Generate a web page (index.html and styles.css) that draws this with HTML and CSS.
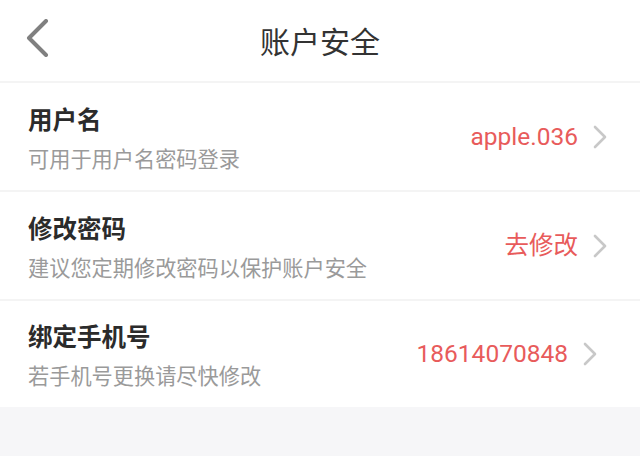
FILE: index.html
```html
<!DOCTYPE html>
<html lang="zh-CN">
<head>
<meta charset="utf-8">
<title>账户安全</title>
<link rel="stylesheet" href="styles.css">
</head>
<body>
<div class="page">
  <header class="topbar">
    <span class="back">
      <svg width="24" height="38" viewBox="0 0 24 38"><polyline points="20,2 3,19 20,36" fill="none" stroke="#808080" stroke-width="4" stroke-linecap="round" stroke-linejoin="round"/></svg>
    </span>
    <h1 class="title">账户安全</h1>
  </header>
  <ul class="list">
    <li class="row">
      <div class="text">
        <div class="label">用户名</div>
        <div class="hint">可用于用户名密码登录</div>
      </div>
      <div class="value">apple.036</div>
      <svg class="arrow" width="14" height="24" viewBox="0 0 14 24"><polyline points="2,2 12,12 2,22" fill="none" stroke="#c8c8c8" stroke-width="2.6" stroke-linecap="round" stroke-linejoin="round"/></svg>
    </li>
    <li class="row">
      <div class="text">
        <div class="label">修改密码</div>
        <div class="hint">建议您定期修改密码以保护账户安全</div>
      </div>
      <div class="value">去修改</div>
      <svg class="arrow" width="14" height="24" viewBox="0 0 14 24"><polyline points="2,2 12,12 2,22" fill="none" stroke="#c8c8c8" stroke-width="2.6" stroke-linecap="round" stroke-linejoin="round"/></svg>
    </li>
    <li class="row row-shift">
      <div class="text">
        <div class="label">绑定手机号</div>
        <div class="hint">若手机号更换请尽快修改</div>
      </div>
      <div class="value">18614070848</div>
      <svg class="arrow" width="14" height="24" viewBox="0 0 14 24"><polyline points="2,2 12,12 2,22" fill="none" stroke="#c8c8c8" stroke-width="2.6" stroke-linecap="round" stroke-linejoin="round"/></svg>
    </li>
  </ul>
</div>
</body>
</html>
```

FILE: styles.css
```css
html, body {
  margin: 0;
  padding: 0;
  background: #f6f6f8;
}
body {
  font-family: Roboto, "Noto Sans CJK SC", sans-serif;
  width: 640px;
  height: 456px;
  overflow: hidden;
}
.page {
  display: flex;
  flex-direction: column;
}
.topbar {
  height: 81px;
  background: #fff;
  display: flex;
  align-items: center;
  justify-content: center;
  position: relative;
  border-bottom: 2px solid #f4f4f4;
}
.back {
  position: absolute;
  left: 26px;
  top: 19px;
  display: block;
  line-height: 0;
}
.title {
  margin: 0;
  font-family: "Noto Sans CJK SC", sans-serif;
  font-size: 30px;
  font-weight: 400;
  color: #333;
  line-height: 40px;
  margin-top: -1px;
}
.list {
  list-style: none;
  margin: 0;
  padding: 0;
  background: #fff;
}
.row {
  height: 107px;
  display: flex;
  align-items: center;
  padding: 0 33px 0 28px;
  border-bottom: 2px solid #f4f4f4;
}
.row:last-child {
  border-bottom: none;
  height: 106px;
}
.row-shift {
  padding-right: 43px;
}
.text {
  flex: 1;
  display: flex;
  flex-direction: column;
  gap: 10px;
  padding-top: 2px;
}
.label {
  font-family: "Noto Sans CJK SC", sans-serif;
  font-size: 24.5px;
  font-weight: 700;
  color: #2b2b2b;
  line-height: 30px;
}
.hint {
  font-family: "Noto Sans CJK SC", sans-serif;
  font-size: 21.2px;
  color: #9a9a9a;
  line-height: 28px;
}
.value {
  font-size: 24.5px;
  color: #e85b5b;
  line-height: 30px;
  margin-right: 15px;
}
.arrow {
  display: block;
  flex: none;
}
```
